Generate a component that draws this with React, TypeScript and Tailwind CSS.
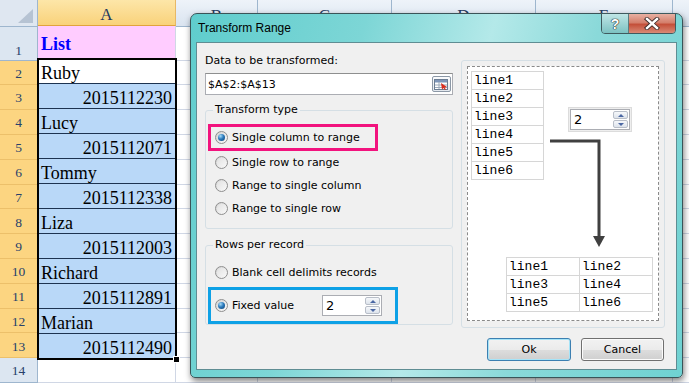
import React from "react";

const rows: [string, boolean][] = [
  ["Ruby", false],
  ["2015112230", true],
  ["Lucy", false],
  ["2015112071", true],
  ["Tommy", false],
  ["2015112338", true],
  ["Liza", false],
  ["2015112003", true],
  ["Richard", false],
  ["2015112891", true],
  ["Marian", false],
  ["2015112490", true],
];

function RowHeaders() {
  return (
    <div className="flex w-[38px] shrink-0 flex-col text-[13.5px] leading-none text-[#27416b]">
      <div className="flex h-[27px] items-end justify-end border-b border-r border-[#9eb6ce] bg-[#dfe7f1] pb-[3px] pr-[4px]">
        <svg width="15" height="14" viewBox="0 0 15 14">
          <polygon points="15,0 15,14 0,14" fill="#b6c3d3" />
        </svg>
      </div>
      <div className="flex h-[34px] items-end justify-center border-b border-r border-[#9eb6ce] bg-[#dce6f1] pb-[2px]">
        1
      </div>
      {rows.map((_, i) => (
        <div
          key={i}
          className="flex h-[25px] items-center justify-center border-b border-r border-b-[#ecc06a] border-r-[#e2a843] bg-[#fcd581] pt-[2px]"
        >
          {i + 2}
        </div>
      ))}
      <div className="flex h-[25px] items-center justify-center border-b border-r border-[#9eb6ce] bg-[#dce6f1] pt-[2px]">
        14
      </div>
    </div>
  );
}

function ColA() {
  return (
    <div className="flex w-[138px] shrink-0 flex-col">
      <div className="flex h-[27px] items-end justify-center border-b border-r border-b-[#e1a33d] border-r-[#e7b866] bg-gradient-to-b from-[#fde6a8] to-[#f9d27a] pb-[2px] text-[17px] leading-none text-[#1f3a60]">
        A
      </div>
      <div className="flex h-[34px] items-center border-b border-r border-[#d0d7e5] bg-[#ffccff] pl-[3px] pt-[4px] text-[18px] font-bold leading-none text-[#0000ff]">
        List
      </div>
      <div className="relative flex flex-col outline-2 -outline-offset-1 outline-black">
        {rows.map(([t, num], i) => (
          <div
            key={i}
            className={`flex h-[25px] items-center pt-[4px] text-[18px] leading-none text-black ${
              i < rows.length - 1 ? "border-b border-[#1d3350]" : ""
            } ${i === 0 ? "bg-white" : "bg-[#b9d8f8]"} ${num ? "justify-end pr-[4px]" : "pl-[3px]"}`}
          >
            {t}
          </div>
        ))}
        <div className="absolute -bottom-[4px] -right-[4px] h-[7px] w-[7px] border border-white bg-black" />
      </div>
      <div className="h-[25px] border-b border-r border-[#d0d7e5]" />
    </div>
  );
}

function EmptyCol({ letter, wCls }: { letter: string; wCls: string }) {
  return (
    <div className={`flex shrink-0 flex-col ${wCls}`}>
      <div className="flex h-[27px] items-end justify-center border-b border-r border-[#9eb6ce] bg-gradient-to-b from-[#eef3f9] to-[#dae4f0] pb-[2px] text-[17px] leading-none text-[#1f3a60]">
        {letter}
      </div>
      <div className="h-[34px] border-b border-r border-[#d0d7e5]" />
      {Array.from({ length: 13 }).map((_, i) => (
        <div key={i} className="h-[25px] border-b border-r border-[#d0d7e5]" />
      ))}
    </div>
  );
}

function Sheet() {
  return (
    <div className="flex h-full font-['Liberation_Serif',serif]">
      <RowHeaders />
      <ColA />
      <EmptyCol letter="B" wCls="w-[82px]" />
      <EmptyCol letter="C" wCls="w-[134px]" />
      <EmptyCol letter="D" wCls="w-[144px]" />
      <EmptyCol letter="E" wCls="w-[137px]" />
      <EmptyCol letter="" wCls="w-[60px]" />
    </div>
  );
}

function Radio({ checked }: { checked?: boolean }) {
  return (
    <span className="flex h-[13px] w-[13px] shrink-0 items-center justify-center rounded-full border border-[#8f8f8f] bg-gradient-to-br from-[#d2d2d2] to-[#fdfdfd]">
      {checked ? (
        <span className="h-[7px] w-[7px] rounded-full bg-[radial-gradient(circle_at_35%_30%,#a9dcf7_0%,#2b7bbd_45%,#0d3e6e_100%)]" />
      ) : (
        <span className="h-[9px] w-[9px] rounded-full bg-gradient-to-br from-[#e2e2e2] to-[#f7f7f7]" />
      )}
    </span>
  );
}

function SpinBtn({ up }: { up?: boolean }) {
  return (
    <div className="flex flex-1 items-center justify-center rounded-[2px] border border-[#b8bec8] bg-gradient-to-b from-[#f6f8fb] to-[#dde3eb]">
      {up ? (
        <div className="h-0 w-0 border-x-[3px] border-b-[3px] border-x-transparent border-b-[#4a67a3]" />
      ) : (
        <div className="h-0 w-0 border-x-[3px] border-t-[3px] border-x-transparent border-t-[#4a67a3]" />
      )}
    </div>
  );
}

function Spin() {
  return (
    <div className="flex h-[21px] w-[60px] border border-[#abadb3] bg-white">
      <span className="flex flex-1 items-center pl-[3px] text-[13px] leading-none text-black">2</span>
      <div className="flex w-[16px] flex-col gap-[1px] py-[1px] pr-[1px]">
        <SpinBtn up />
        <SpinBtn />
      </div>
    </div>
  );
}

function Option({ label, checked }: { label: string; checked?: boolean }) {
  return (
    <div className="flex items-center gap-[4px]">
      <Radio checked={checked} />
      <span>{label}</span>
    </div>
  );
}

function Cell({ t, wCls = "w-[72px]" }: { t: string; wCls?: string }) {
  return (
    <div className={`flex h-[19px] items-center border border-[#d6d6d6] pl-[2px] ${wCls}`}>{t}</div>
  );
}

function Preview() {
  return (
    <div className="relative flex-1 border border-dashed border-[#8a8a8a] bg-white font-['Liberation_Mono',monospace] text-[13px] leading-none text-black">
      <div className="ml-[3px] mt-[4px] flex w-[73px] flex-col [&>div+div]:-mt-px">
        {["line1", "line2", "line3", "line4", "line5", "line6"].map((l) => (
          <Cell key={l} t={l} wCls="w-[73px]" />
        ))}
      </div>
      <div className="ml-[38px] mt-[77px] grid w-[146px] grid-cols-2 [&>div]:-mb-px [&>div]:-mr-px">
        {["line1", "line2", "line3", "line4", "line5", "line6"].map((l) => (
          <Cell key={l} t={l} wCls="w-auto" />
        ))}
      </div>
      <div className="absolute left-[100px] top-[40px] border border-[#dcdcdc] bg-[#eeeeee] p-[1px] font-['DejaVu_Sans',sans-serif]">
        <Spin />
      </div>
      <svg className="absolute left-0 top-0" width="190" height="200" viewBox="0 0 190 200">
        <polyline points="82,74 131,74 131,171" fill="none" stroke="#404040" strokeWidth="3" />
        <polygon points="125,169 137,169 131,180" fill="#404040" />
      </svg>
    </div>
  );
}

function RangeIcon() {
  return (
    <div className="flex h-[16px] w-[19px] items-center justify-center rounded-[2px] border border-[#8c98a6] bg-gradient-to-b from-[#fbfcfd] to-[#e3e8ee]">
      <svg width="15" height="11" viewBox="0 0 15 11">
        <rect x="0.5" y="0.5" width="13" height="10" fill="#fff" stroke="#6b7d93" />
        <rect x="1" y="1" width="12" height="2.5" fill="#7d95b8" />
        <line x1="1" y1="6" x2="13" y2="6" stroke="#9aa8b8" />
        <line x1="1" y1="8.5" x2="13" y2="8.5" stroke="#9aa8b8" />
        <line x1="5" y1="3" x2="5" y2="10" stroke="#9aa8b8" />
        <polygon points="7,4 13,8 10.5,8.4 12,10.5 11,11 9.5,9 8,10.5" fill="#d92b1c" />
      </svg>
    </div>
  );
}

function Button({ label, focus }: { label: string; focus?: boolean }) {
  return (
    <div
      className={`flex h-[23px] items-center justify-center rounded-[3px] border bg-[linear-gradient(#f2f2f2_0%,#ebebeb_50%,#dddddd_51%,#cfcfcf_100%)] ${
        focus
          ? "w-[84px] border-[#3c7fb1] shadow-[inset_0_0_0_1px_#a6e4f8]"
          : "w-[83px] border-[#707070] shadow-[inset_0_0_0_1px_#fbfbfb]"
      }`}
    >
      {label}
    </div>
  );
}

function Dialog() {
  return (
    <div className="absolute left-[190px] top-[13px] flex h-[365px] w-[493px] flex-col rounded-t-[7px] rounded-b-[5px] border border-[#3a5458] bg-[linear-gradient(105deg,#5fcdcd_0%,#7dd6d6_30%,#b4e9e9_52%,#8ad9d9_70%,#6fd2d2_100%)] shadow-[1px_3px_6px_rgba(0,0,0,0.5)] font-['DejaVu_Sans',sans-serif] text-[11px] leading-none text-black">
      <div className="flex h-[28px] items-start">
        <span className="pl-[7px] pt-[8px] font-['Liberation_Sans',sans-serif] text-[12px] text-black">
          Transform Range
        </span>
        <div className="ml-auto mr-[6px] -mt-px flex h-[21px] overflow-hidden rounded-b-[4px] border border-[#3f5a5e]">
          <div className="flex w-[27px] items-center justify-center border-r border-[#5b7d80] bg-gradient-to-b from-[#bfe6e6] to-[#7cc2c2] font-['Liberation_Sans',sans-serif] text-[14px] font-bold text-white [text-shadow:0_0_1px_#222,0_0_1px_#222,0_0_1px_#222]">
            ?
          </div>
          <div className="flex w-[46px] items-center justify-center bg-[linear-gradient(#e8b0a2_0%,#d47f6c_45%,#c4503a_55%,#d98a76_100%)]">
            <svg width="16" height="13" viewBox="0 0 16 13">
              <path d="M3 2 L13 11 M13 2 L3 11" stroke="#3a2a28" strokeWidth="4.2" strokeLinecap="square" />
              <path d="M3 2 L13 11 M13 2 L3 11" stroke="#ffffff" strokeWidth="2.4" strokeLinecap="square" />
            </svg>
          </div>
        </div>
      </div>
      <div className="mx-[5px] mb-[7px] flex flex-1 flex-col border border-[#5f8d93] bg-[#f0f0f0] pl-[8px] pt-[9px]">
        <div className="flex gap-[8px]">
          <div className="flex w-[248px] flex-col">
            <div className="flex h-[16px] items-center">Data to be transformed:</div>
            <div className="mt-[5px] flex h-[22px] items-center justify-between border border-[#abadb3] border-t-[#8e8f8f] bg-white pl-[2px] pr-[1px]">
              <span>$A$2:$A$13</span>
              <RangeIcon />
            </div>
            <fieldset className="mt-[7px] rounded-[3px] border border-[#d5dfe5] px-[2px] pb-[8px]">
              <legend className="ml-[5px] px-[2px] leading-[16px]">Transform type</legend>
              <div className="mt-[6px] flex h-[27px] w-[170px] items-center border-[3px] border-[#f2137e] pl-[4px]">
                <Option label="Single column to range" checked />
              </div>
              <div className="flex h-[23px] items-center pl-[7px]">
                <Option label="Single row to range" />
              </div>
              <div className="flex h-[23px] items-center pl-[7px]">
                <Option label="Range to single column" />
              </div>
              <div className="flex h-[23px] items-center pl-[7px]">
                <Option label="Range to single row" />
              </div>
            </fieldset>
            <fieldset className="mt-[8px] rounded-[3px] border border-[#d5dfe5] px-[2px]">
              <legend className="ml-[5px] px-[2px] leading-[16px]">Rows per record</legend>
              <div className="mt-[8px] flex h-[22px] items-center pl-[7px]">
                <Option label="Blank cell delimits records" />
              </div>
              <div className="mt-[4px] flex h-[37px] w-[190px] items-center border-[3px] border-[#0ea1e6] pl-[4px]">
                <div className="w-[107px]">
                  <Option label="Fixed value" checked />
                </div>
                <Spin />
              </div>
            </fieldset>
          </div>
          <div className="mt-[8px] flex h-[268px] w-[204px] flex-col rounded-[3px] border border-[#d5dfe5] p-[5px] pb-[6px]">
            <Preview />
          </div>
        </div>
        <div className="mt-[10px] flex gap-[10px] pl-[282px]">
          <Button label="Ok" focus />
          <Button label="Cancel" />
        </div>
      </div>
    </div>
  );
}

export default function App() {
  return (
    <div className="relative h-[383px] w-[689px] overflow-hidden bg-white">
      <Sheet />
      <Dialog />
    </div>
  );
}
